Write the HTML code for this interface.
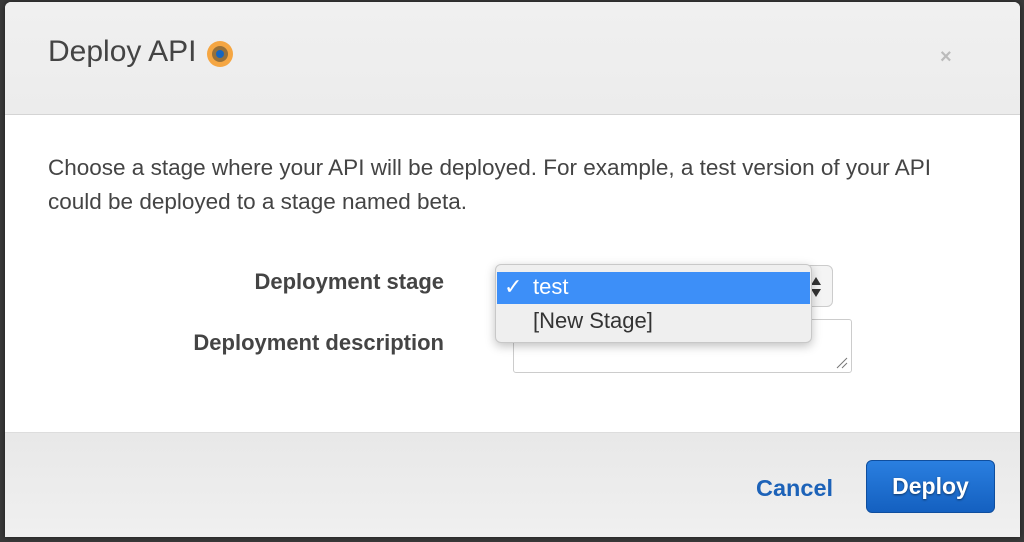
<!DOCTYPE html>
<html><head><meta charset="utf-8"><style>
*{margin:0;padding:0;box-sizing:border-box}
body{width:1024px;height:542px;background:#3a3a3a;position:relative;overflow:hidden;font-family:"Liberation Sans",sans-serif}
.modal{position:absolute;left:5px;top:2px;width:1015px;height:535px;background:#fff;border-radius:6px 6px 0 0;overflow:hidden;box-shadow:0 0 6px rgba(0,0,0,.5)}
.hdr{position:absolute;left:0;top:0;width:100%;height:113px;background:linear-gradient(#f0f0f0,#ececec);border-bottom:1px solid #d4d4d4}
.title{position:absolute;left:43px;top:33px;font-size:30px;color:#444}
.dot{position:absolute;left:202px;top:39px;width:26px;height:26px;border-radius:50%;background:#f5a642}
.dot:after{content:"";position:absolute;left:5px;top:5px;width:16px;height:16px;border-radius:50%;background:#96703a}
.dot:before{content:"";position:absolute;left:9px;top:9px;width:8px;height:8px;border-radius:50%;background:#1565c0;z-index:2}
.x{position:absolute;left:935px;top:44px;font-size:20px;color:#bbb;font-weight:bold}
.desc{position:absolute;left:43px;top:149px;font-size:22.5px;line-height:34px;color:#444;width:915px}
.lbl{position:absolute;right:576px;font-size:22px;font-weight:bold;color:#444}
.sel{position:absolute;left:790px;top:263px;width:38px;height:42px;border:1px solid #ccc;border-radius:6px;background:#f4f4f4}
.ta{position:absolute;left:508px;top:317px;width:339px;height:54px;border:1px solid #ccc;border-radius:3px;background:#fff}
.dd{position:absolute;left:490px;top:262px;width:317px;height:79px;background:#efefef;border:1px solid #c8c8c8;border-radius:6px;box-shadow:0 3px 10px rgba(0,0,0,.25);font-size:22px;color:#333}
.opt1{position:absolute;left:1px;top:7px;width:313px;height:32px;background:#3d8ff8;color:#fff}
.ftr{position:absolute;left:0;top:430px;width:100%;height:105px;background:linear-gradient(#e8e8e8,#f0f0f0);border-top:1px solid #ddd}
.cancel{position:absolute;left:751px;top:42px;font-size:23.5px;font-weight:bold;color:#1c62b8}
.btn{position:absolute;left:861px;top:27px;width:129px;height:53px;border-radius:6px;background:linear-gradient(#2a7fe0,#1460c0);border:1px solid #0f4e9e;color:#fff;font-size:23px;font-weight:bold;text-align:center;line-height:51px;text-shadow:0 1px 2px rgba(0,0,0,.5)}
</style></head><body>
<div class="modal">
<div class="hdr"><div class="title">Deploy API</div><div class="dot"></div><div class="x">×</div></div>
<div class="desc">Choose a stage where your API will be deployed. For example, a test version of your API could be deployed to a stage named beta.</div>
<div class="lbl" style="top:267px">Deployment stage</div>
<div class="lbl" style="top:328px">Deployment description</div>
<div class="sel"><svg width="38" height="42" style="position:absolute;left:12px;top:0"><path d="M3 19 L8 11 L13 19Z M3 23 L8 31 L13 23Z" fill="#333"/></svg></div>
<div class="ta"><svg width="14" height="14" style="position:absolute;right:2px;bottom:2px"><path d="M2 12 L12 2 M7 12 L12 7" stroke="#777" stroke-width="1"/></svg></div>
<div class="dd"><div class="opt1"><span style="position:absolute;left:7px;top:2px">✓</span><span style="position:absolute;left:36px;top:2px">test</span></div><span style="position:absolute;left:37px;top:43px">[New Stage]</span></div>
<div class="ftr"><div class="cancel">Cancel</div><div class="btn">Deploy</div></div>
</div>
</body></html>
